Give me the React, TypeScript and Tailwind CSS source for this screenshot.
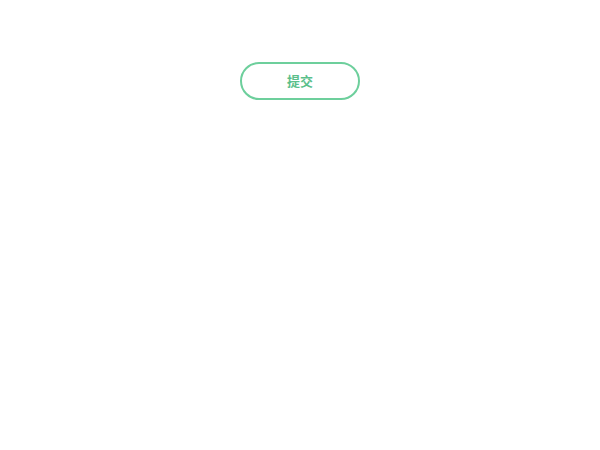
export default function App() {
  return (
    <div className="min-h-[450px] w-full bg-white flex justify-center pt-[62px]">
      <button
        type="button"
        className="w-[120px] h-[38px] rounded-full border-2 border-[#6dcf9c] bg-white text-[#5bbf8b] text-[13px] font-bold flex items-center justify-center pt-[2px]"
        style={{ fontFamily: '"Noto Sans", "Noto Sans CJK SC", sans-serif' }}
      >
        提交
      </button>
    </div>
  );
}
